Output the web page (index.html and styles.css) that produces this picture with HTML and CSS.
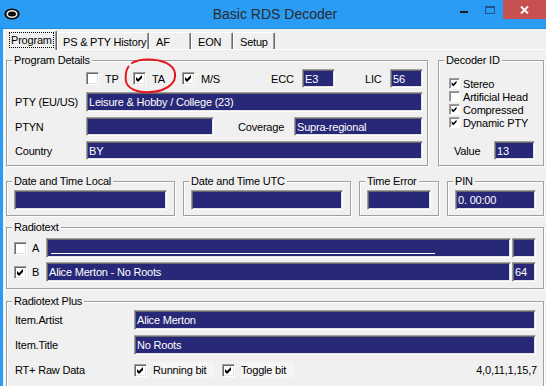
FILE: index.html
```html
<!DOCTYPE html>
<html>
<head>
<meta charset="utf-8">
<title>Basic RDS Decoder</title>
<link rel="stylesheet" href="styles.css">
</head>
<body>
<div class="window">
  <div class="titlebar">
    <div class="tb-left">
      <svg class="appicon" width="16" height="12" viewBox="0 0 16 12">
        <ellipse cx="8" cy="6" rx="7.6" ry="5.6" fill="#0a0a0a"/>
        <ellipse cx="8" cy="6" rx="4.8" ry="3.3" fill="none" stroke="#e8e8e8" stroke-width="1.6"/>
        <ellipse cx="8" cy="6.2" rx="2" ry="1.4" fill="#111"/>
      </svg>
    </div>
    <div class="tb-title">Basic RDS Decoder</div>
    <div class="tb-btn tb-min"><span class="min-glyph"></span></div>
    <div class="tb-btn tb-max"><span class="max-glyph"></span></div>
    <div class="tb-btn tb-close">
      <svg width="9" height="8" viewBox="0 0 9 8"><path d="M1 0.5 L8 7.5 M8 0.5 L1 7.5" stroke="#fff" stroke-width="1.8"/></svg>
    </div>
  </div>
  <div class="client">
    <div class="tabs">
      <div class="tab sel"><span class="focus">Program</span></div>
      <div class="tab w-ps">PS &amp; PTY History</div>
      <div class="tab w-sm">AF</div>
      <div class="tab w-sm">EON</div>
      <div class="tab w-sm">Setup</div>
    </div>
    <div class="panel">
      <div class="row1">
        <div class="group g-prog">
          <div class="gtitle">Program Details</div>
          <div class="pd-body">
            <div class="pd-row r-flags">
              <span class="lbl"></span>
              <span class="chk w-tp"><span class="cb"></span>TP</span>
              <span class="chk w-ta"><span class="cb"><svg viewBox="1 1 11 11"><polygon points="3,5 5,7 9,3 9,6 5,10 3,8"/></svg></span>TA</span>
              <span class="chk w-ms"><span class="cb"><svg viewBox="1 1 11 11"><polygon points="3,5 5,7 9,3 9,6 5,10 3,8"/></svg></span>M/S</span>
              <span class="ecc-l">ECC</span>
              <span class="field f-sm">E3</span>
              <span class="lic-l">LIC</span>
              <span class="field f-sm">56</span>
            </div>
            <div class="pd-row r-pty">
              <span class="lbl">PTY (EU/US)</span>
              <span class="field f-pty">Leisure &amp; Hobby / College (23)</span>
            </div>
            <div class="pd-row r-ptyn">
              <span class="lbl">PTYN</span>
              <span class="field f-ptyn"></span>
              <span class="cov-l">Coverage</span>
              <span class="field f-cov">Supra-regional</span>
            </div>
            <div class="pd-row r-country">
              <span class="lbl">Country</span>
              <span class="field f-pty">BY</span>
            </div>
          </div>
        </div>
        <div class="group g-dec">
          <div class="gtitle">Decoder ID</div>
          <div class="dec-body">
            <div class="dchk"><span class="cb s"><svg viewBox="1 1 11 11"><polygon points="3,5 5,7 9,3 9,6 5,10 3,8"/></svg></span>Stereo</div>
            <div class="dchk"><span class="cb s"></span>Artificial Head</div>
            <div class="dchk"><span class="cb s"><svg viewBox="1 1 11 11"><polygon points="3,5 5,7 9,3 9,6 5,10 3,8"/></svg></span>Compressed</div>
            <div class="dchk"><span class="cb s"><svg viewBox="1 1 11 11"><polygon points="3,5 5,7 9,3 9,6 5,10 3,8"/></svg></span>Dynamic PTY</div>
            <div class="dec-value">
              <span class="val-l">Value</span>
              <span class="field f-val">13</span>
            </div>
          </div>
        </div>
      </div>

      <div class="row2">
        <div class="group g-dtl">
          <div class="gtitle">Date and Time Local</div>
          <div class="r2-body"><span class="field"></span></div>
        </div>
        <div class="group g-utc">
          <div class="gtitle">Date and Time UTC</div>
          <div class="r2-body"><span class="field"></span></div>
        </div>
        <div class="group g-te">
          <div class="gtitle">Time Error</div>
          <div class="r2-body"><span class="field"></span></div>
        </div>
        <div class="group g-pin">
          <div class="gtitle">PIN</div>
          <div class="r2-body"><span class="field">0. 00:00</span></div>
        </div>
      </div>

      <div class="group g-rt">
        <div class="gtitle">Radiotext</div>
        <div class="rt-body">
          <div class="rt-row">
            <span class="rt-key"><span class="cb"></span>A</span>
            <span class="field f-rt"><span class="uline"></span></span>
            <span class="field f-rtn"></span>
          </div>
          <div class="rt-row">
            <span class="rt-key"><span class="cb"><svg viewBox="1 1 11 11"><polygon points="3,5 5,7 9,3 9,6 5,10 3,8"/></svg></span>B</span>
            <span class="field f-rt">Alice Merton - No Roots</span>
            <span class="field f-rtn">64</span>
          </div>
        </div>
      </div>

      <div class="group g-rtp">
        <div class="gtitle">Radiotext Plus</div>
        <div class="rtp-body">
          <div class="rtp-row">
            <span class="rtp-lbl">Item.Artist</span>
            <span class="field f-rt">Alice Merton</span>
          </div>
          <div class="rtp-row">
            <span class="rtp-lbl">Item.Title</span>
            <span class="field f-rt">No Roots</span>
          </div>
          <div class="raw-row">
            <span class="rtp-lbl">RT+ Raw Data</span>
            <span class="chk w-run"><span class="cb"><svg viewBox="1 1 11 11"><polygon points="3,5 5,7 9,3 9,6 5,10 3,8"/></svg></span><span class="chk-txt">Running bit</span></span>
            <span class="chk w-tog"><span class="cb"><svg viewBox="1 1 11 11"><polygon points="3,5 5,7 9,3 9,6 5,10 3,8"/></svg></span><span class="chk-txt">Toggle bit</span></span>
            <span class="raw-val">4,0,11,1,15,7</span>
          </div>
        </div>
      </div>
    </div>
  </div>
</div>
<svg class="annot" width="64" height="44" viewBox="118 54 64 44">
  <path d="M132 63 C137 60 142 59.5 148 59.5 C162 59.5 173.5 64 175 73.5 C176.5 83.5 166 91 151 92 C136 93 126.5 88 125.8 80 C125.3 74 126.5 69.5 128.5 66.5" fill="none" stroke="#e8141c" stroke-width="2" stroke-linecap="round"/>
</svg>
</body>
</html>
```

FILE: styles.css
```css
* { box-sizing: border-box; }
html, body { margin: 0; padding: 0; }
body {
  position: relative;
  width: 546px;
  height: 386px;
  overflow: hidden;
  background: #f0f0f0;
  font-family: "Liberation Sans", Arial, sans-serif;
  font-size: 11px;
  letter-spacing: -0.2px;
  color: #000;
}

.window {
  width: 546px;
  height: 386px;
  display: flex;
  flex-direction: column;
}

/* ---------- title bar ---------- */
.titlebar {
  flex: none;
  height: 29px;
  background: #2b9cf4;
  border-bottom: 1px solid #2390e6;
  display: flex;
  align-items: center;
}
.tb-left {
  width: 99px;
  padding-left: 4px;
  display: flex;
  align-items: center;
  align-self: stretch;
}
.appicon { display: block; }
.tb-title {
  flex: 1;
  text-align: center;
  font-size: 14px;
  letter-spacing: 0;
  color: #2a2a2a;
}
.tb-btn {
  align-self: flex-start;
  height: 19px;
  width: 26px;
  display: flex;
  justify-content: center;
}
.tb-min { align-items: flex-start; padding-top: 11px; }
.min-glyph { width: 8px; height: 2px; background: #1c1c1c; }
.tb-max { align-items: center; }
.max-glyph {
  width: 10px;
  height: 8px;
  border: 1px solid #1d5588;
  border-top-width: 2px;
}
.tb-close {
  width: 43px;
  background: #c75050;
  align-items: center;
}
.tb-close svg { display: block; }

/* ---------- client ---------- */
.client {
  flex: 1;
  min-height: 0;
  background: #f0f0f0;
  border-left: 3px solid #2b9cf4;
  display: flex;
  flex-direction: column;
}

.tabs {
  position: relative;
  z-index: 1;
  flex: none;
  height: 20px;
  display: flex;
  align-items: flex-end;
  padding-left: 1px;
}
.tab {
  height: 17px;
  padding: 2px 0 0 5px;
  border-top: 1px solid #fff;
  border-left: 1px solid #fff;
  border-right: 1px solid #696969;
  border-top-left-radius: 2px;
  border-top-right-radius: 2px;
  box-shadow: inset -1px 0 0 #a0a0a0;
  display: flex;
  align-items: center;
  white-space: nowrap;
}
.tab.sel {
  width: 53px;
  height: 20px;
  margin-bottom: -1px;
  padding: 1px 0 0 4px;
  background: #f0f0f0;
  align-items: flex-start;
}
.focus {
  width: 45px;
  height: 16px;
  padding-left: 1px;
  border: 1px dotted #000;
  display: flex;
  align-items: center;
}
.w-ps { width: 92px; }
.w-sm { width: 42px; padding-left: 6px; }

.panel {
  flex: 1;
  min-height: 0;
  margin-left: 1px;
  padding-left: 1px;
  border-top: 1px solid #fff;
  border-left: 1px solid #fff;
  display: flex;
  flex-direction: column;
}

/* ---------- group boxes ---------- */
.group {
  flex: none;
  border: 1px solid #a0a0a0;
  box-shadow: inset 1px 1px 0 #fff, 1px 1px 0 #fff;
  display: flex;
  flex-direction: column;
}
.gtitle {
  align-self: flex-start;
  height: 13px;
  line-height: 13px;
  margin: -7px 0 -6px 5px;
  padding: 0 2px;
  background: #f0f0f0;
  white-space: nowrap;
}

/* ---------- fields & checkboxes ---------- */
.field {
  flex: none;
  background: #282878;
  color: #fff;
  border: 1px solid;
  border-color: #a0a0a0 #fff #fff #a0a0a0;
  box-shadow: inset 1px 1px 0 #696969, inset -1px -1px 0 #e3e3e3;
  padding-left: 2px;
  display: flex;
  align-items: center;
  white-space: nowrap;
  overflow: hidden;
  align-self: stretch;
}
.cb {
  flex: none;
  width: 13px;
  height: 13px;
  margin-right: 6px;
  background: #fff;
  border: 1px solid;
  border-color: #a0a0a0 #fff #fff #a0a0a0;
  box-shadow: inset 1px 1px 0 #696969, inset -1px -1px 0 #e3e3e3;
}
.cb svg { display: block; width: 100%; height: 100%; fill: #000; }
.cb.s {
  width: 11px;
  height: 11px;
  margin-right: 3px;
  box-shadow: inset 1px 1px 0 #8a8a8a;
}
.chk {
  flex: none;
  display: flex;
  align-items: center;
  white-space: nowrap;
}

/* ---------- row 1 ---------- */
.row1 {
  flex: none;
  display: flex;
  gap: 10px;
  margin-top: 10px;
  height: 106px;
}
.g-prog { width: 422px; }
.g-dec { width: 106px; }

.pd-body {
  padding-left: 8px;
  display: flex;
  flex-direction: column;
}
.pd-row {
  display: flex;
  align-items: center;
  height: 19px;
}
.r-flags { margin-top: 8px; }
.r-pty { margin-top: 4px; height: 20px; }
.r-ptyn { margin-top: 5px; }
.r-country { margin-top: 5px; }
.lbl { flex: none; width: 71px; white-space: nowrap; }
.w-tp { width: 47px; }
.w-ta { width: 49px; }
.w-ms { width: 89px; }
.ecc-l { flex: none; width: 31px; }
.f-sm { width: 33px; }
.lic-l { flex: none; width: 25px; margin-left: 30px; }
.f-pty { width: 337px; }
.f-ptyn { width: 128px; }
.cov-l { flex: none; width: 56px; margin-left: 24px; }
.f-cov { width: 129px; }

.dec-body {
  padding: 16px 0 0 10px;
  display: flex;
  flex-direction: column;
}
.dchk {
  height: 13px;
  display: flex;
  align-items: center;
  white-space: nowrap;
}
.dec-value {
  margin: 12px 0 0 5px;
  height: 19px;
  display: flex;
  align-items: center;
}
.val-l { flex: none; width: 40px; }
.f-val { width: 41px; }

/* ---------- row 2 ---------- */
.row2 {
  flex: none;
  display: flex;
  gap: 8px;
  margin-top: 15px;
  height: 35px;
}
.g-dtl { width: 169px; }
.g-utc { width: 168px; }
.g-te { width: 80px; }
.g-pin { width: 97px; }
.r2-body {
  padding: 8px 7px 0 7px;
  display: flex;
}
.r2-body .field { flex: 1; height: 20px; }

/* ---------- radiotext ---------- */
.g-rt { width: 538px; height: 62px; margin-top: 11px; }
.rt-body { padding: 10px 7px 0 7px; }
.rt-row { display: flex; height: 20px; }
.rt-row + .rt-row { margin-top: 4px; }
.rt-key {
  flex: none;
  width: 32px;
  display: flex;
  align-items: center;
}
.rt-key .cb { margin-right: 5px; }
.f-rt { flex: 1; }
.f-rtn { width: 24px; margin-left: 1px; }
.uline {
  align-self: flex-end;
  width: 384px;
  height: 1px;
  margin: 0 0 3px 2px;
  background: #fff;
}

/* ---------- radiotext plus ---------- */
.g-rtp { width: 538px; height: 90px; margin-top: 12px; }
.rtp-body { padding: 8px 7px 0 8px; }
.rtp-row { display: flex; height: 20px; }
.rtp-row + .rtp-row { margin-top: 5px; }
.rtp-lbl {
  flex: none;
  width: 119px;
  display: flex;
  align-items: center;
  white-space: nowrap;
}
.raw-row {
  margin-top: 7px;
  height: 16px;
  display: flex;
  align-items: center;
}
.w-run { width: 88px; }
.chk-txt { background: #f5f5f5; padding-right: 8px; line-height: 16px; }
.raw-val { margin-left: auto; margin-right: -1px; white-space: nowrap; }

/* ---------- annotation ---------- */
.annot {
  position: absolute;
  left: 118px;
  top: 54px;
}
```
